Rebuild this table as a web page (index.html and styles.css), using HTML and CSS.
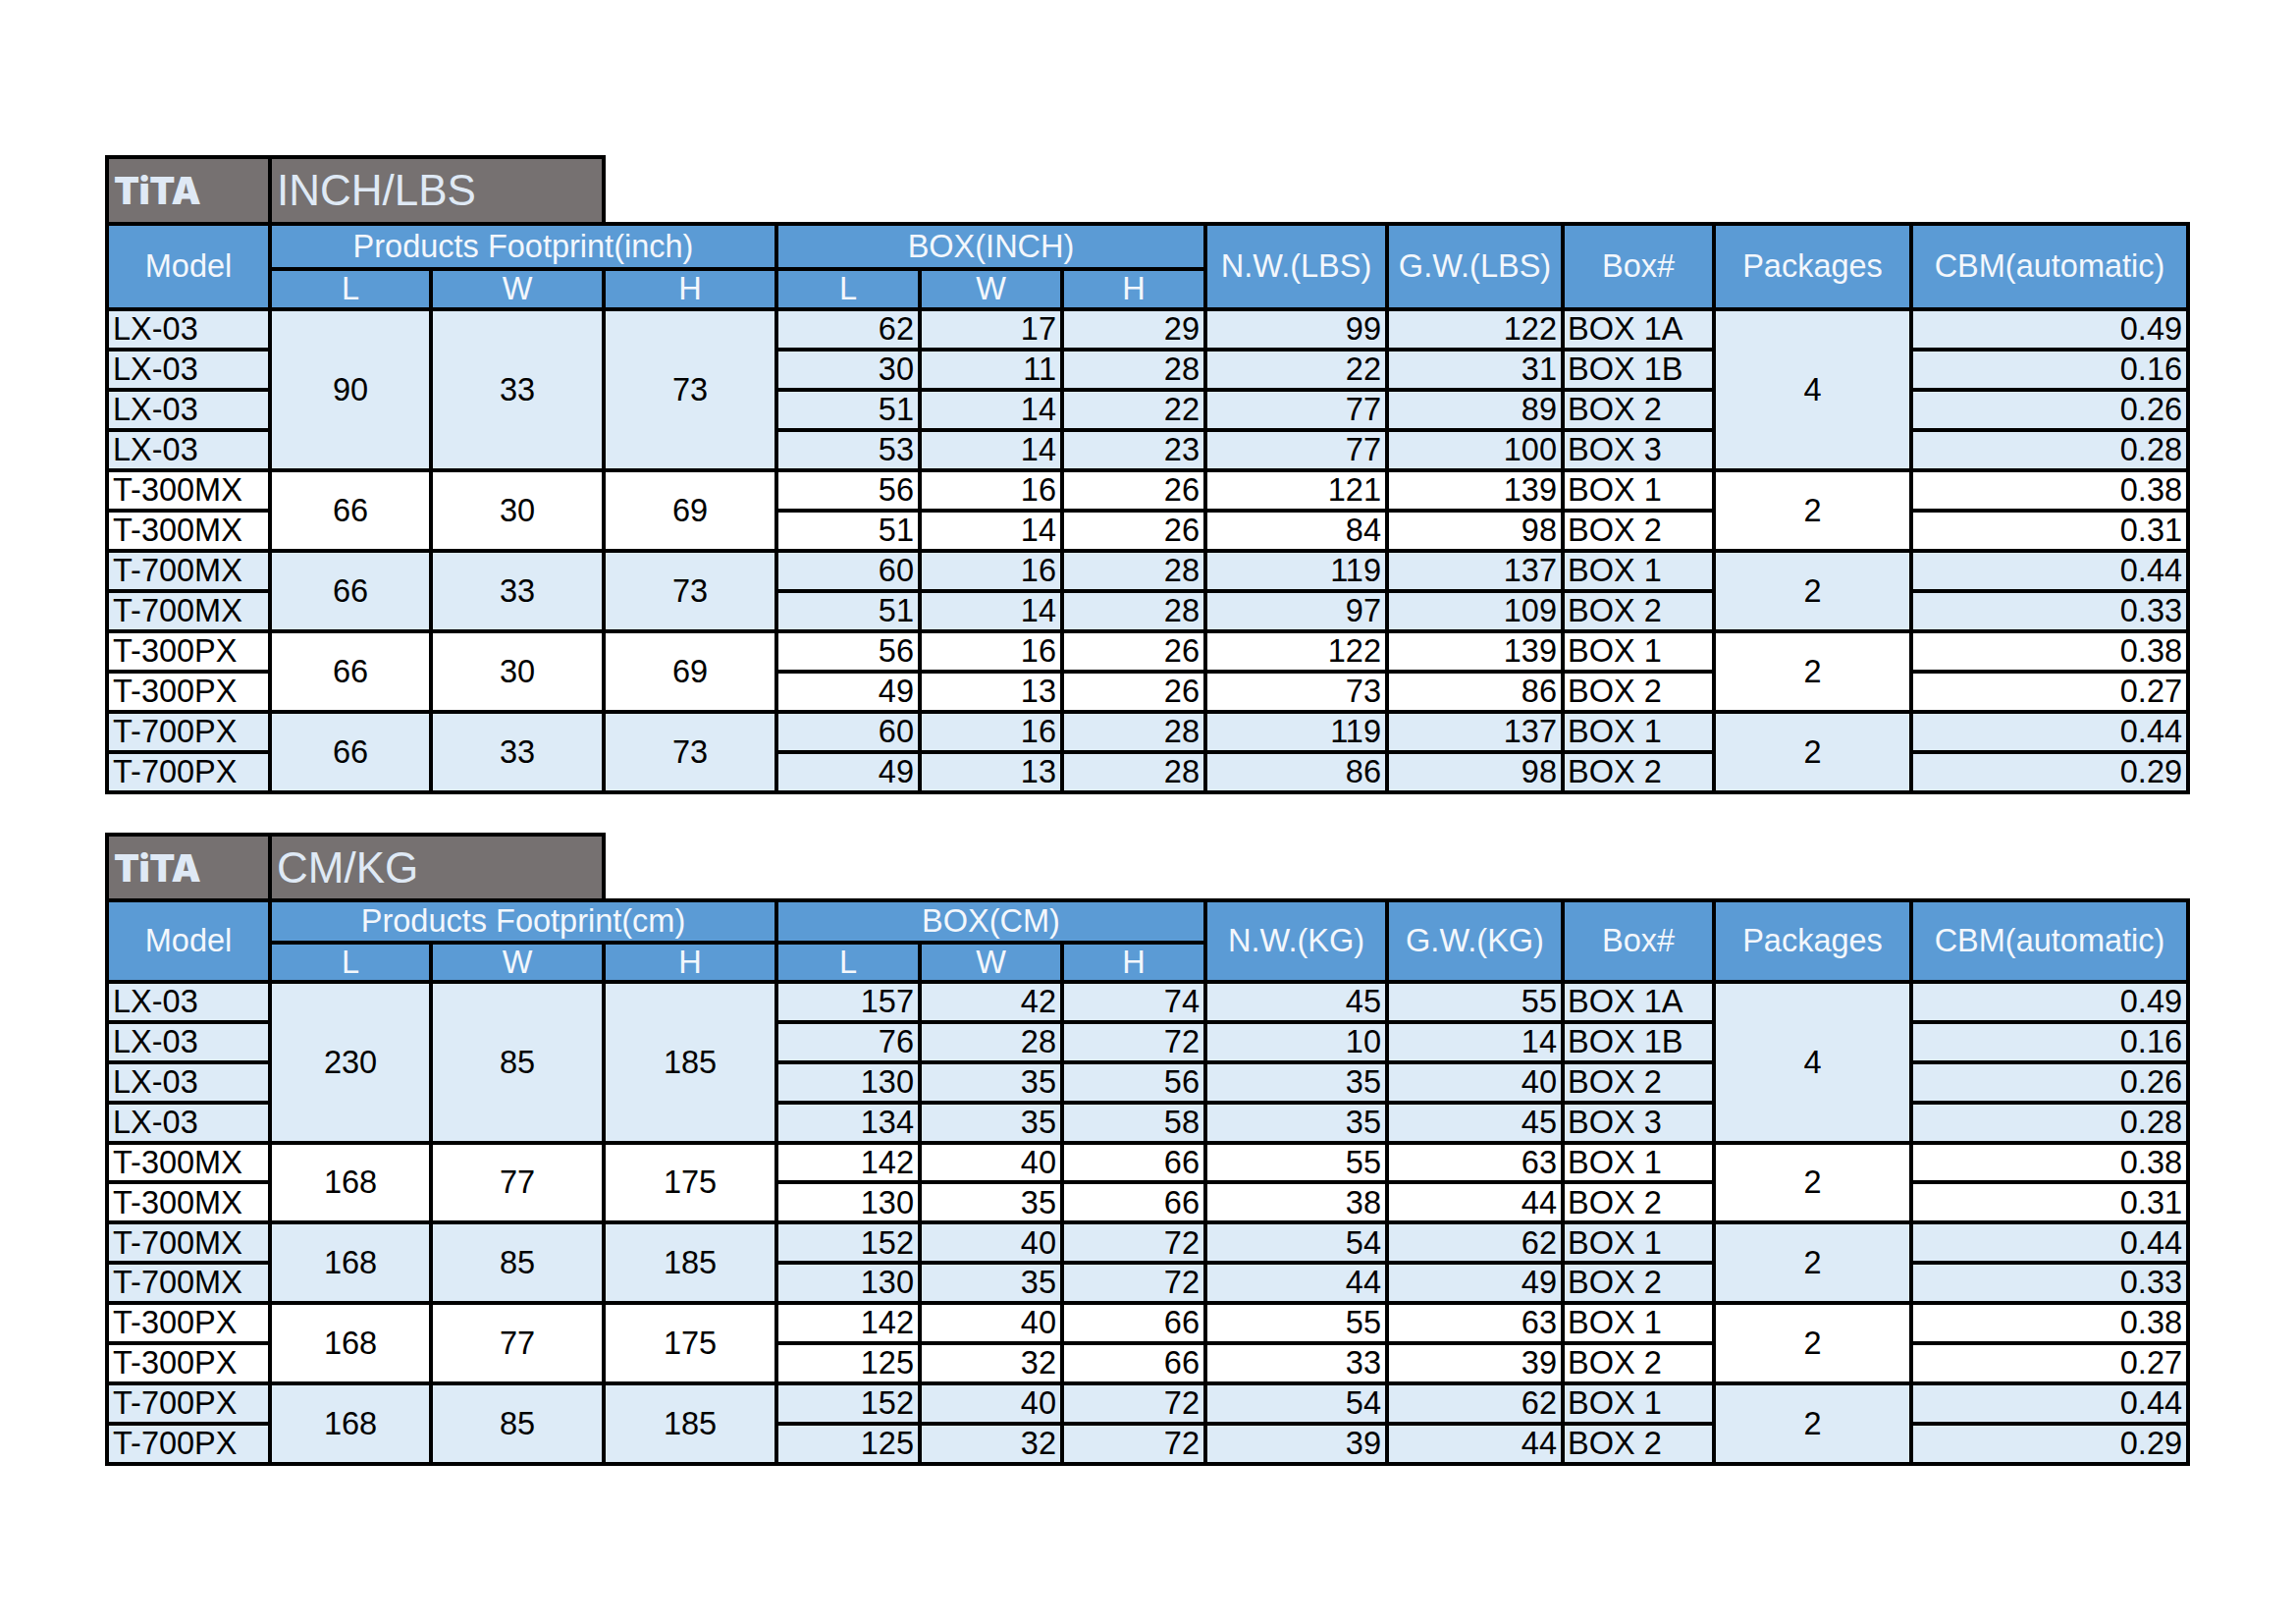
FILE: index.html
```html
<!DOCTYPE html>
<html>
<head>
<meta charset="utf-8">
<title>TiTA packing list</title>
<link rel="stylesheet" href="styles.css">
</head>
<body>
<div class="page">

<table class="spec">
  <colgroup>
    <col class="w-model"><col class="w-fl"><col class="w-fw"><col class="w-fh">
    <col class="w-bl"><col class="w-bw"><col class="w-bh">
    <col class="w-nw"><col class="w-gw"><col class="w-box"><col class="w-pkg"><col class="w-cbm">
  </colgroup>
  <tbody>
    <tr class="r-title"><td class="logo">TiTA</td><td class="title" colspan="2">INCH/LBS</td><td class="blank" colspan="9"></td></tr>
    <tr class="r-h1"><th rowspan="2">Model</th><th colspan="3">Products Footprint(inch)</th><th colspan="3">BOX(INCH)</th><th rowspan="2">N.W.(LBS)</th><th rowspan="2">G.W.(LBS)</th><th rowspan="2">Box#</th><th rowspan="2">Packages</th><th rowspan="2">CBM(automatic)</th></tr>
    <tr class="r-h2"><th>L</th><th>W</th><th>H</th><th>L</th><th>W</th><th>H</th></tr>
  </tbody>
  <tbody class="tint">
    <tr><td class="m">LX-03</td><td class="c" rowspan="4">90</td><td class="c" rowspan="4">33</td><td class="c" rowspan="4">73</td><td class="r">62</td><td class="r">17</td><td class="r">29</td><td class="r">99</td><td class="r">122</td><td class="l">BOX 1A</td><td class="c" rowspan="4">4</td><td class="r">0.49</td></tr>
    <tr><td class="m">LX-03</td><td class="r">30</td><td class="r">11</td><td class="r">28</td><td class="r">22</td><td class="r">31</td><td class="l">BOX 1B</td><td class="r">0.16</td></tr>
    <tr><td class="m">LX-03</td><td class="r">51</td><td class="r">14</td><td class="r">22</td><td class="r">77</td><td class="r">89</td><td class="l">BOX 2</td><td class="r">0.26</td></tr>
    <tr><td class="m">LX-03</td><td class="r">53</td><td class="r">14</td><td class="r">23</td><td class="r">77</td><td class="r">100</td><td class="l">BOX 3</td><td class="r">0.28</td></tr>
  </tbody>
  <tbody class="plain">
    <tr><td class="m">T-300MX</td><td class="c" rowspan="2">66</td><td class="c" rowspan="2">30</td><td class="c" rowspan="2">69</td><td class="r">56</td><td class="r">16</td><td class="r">26</td><td class="r">121</td><td class="r">139</td><td class="l">BOX 1</td><td class="c" rowspan="2">2</td><td class="r">0.38</td></tr>
    <tr><td class="m">T-300MX</td><td class="r">51</td><td class="r">14</td><td class="r">26</td><td class="r">84</td><td class="r">98</td><td class="l">BOX 2</td><td class="r">0.31</td></tr>
  </tbody>
  <tbody class="tint">
    <tr><td class="m">T-700MX</td><td class="c" rowspan="2">66</td><td class="c" rowspan="2">33</td><td class="c" rowspan="2">73</td><td class="r">60</td><td class="r">16</td><td class="r">28</td><td class="r">119</td><td class="r">137</td><td class="l">BOX 1</td><td class="c" rowspan="2">2</td><td class="r">0.44</td></tr>
    <tr><td class="m">T-700MX</td><td class="r">51</td><td class="r">14</td><td class="r">28</td><td class="r">97</td><td class="r">109</td><td class="l">BOX 2</td><td class="r">0.33</td></tr>
  </tbody>
  <tbody class="plain">
    <tr><td class="m">T-300PX</td><td class="c" rowspan="2">66</td><td class="c" rowspan="2">30</td><td class="c" rowspan="2">69</td><td class="r">56</td><td class="r">16</td><td class="r">26</td><td class="r">122</td><td class="r">139</td><td class="l">BOX 1</td><td class="c" rowspan="2">2</td><td class="r">0.38</td></tr>
    <tr><td class="m">T-300PX</td><td class="r">49</td><td class="r">13</td><td class="r">26</td><td class="r">73</td><td class="r">86</td><td class="l">BOX 2</td><td class="r">0.27</td></tr>
  </tbody>
  <tbody class="tint">
    <tr><td class="m">T-700PX</td><td class="c" rowspan="2">66</td><td class="c" rowspan="2">33</td><td class="c" rowspan="2">73</td><td class="r">60</td><td class="r">16</td><td class="r">28</td><td class="r">119</td><td class="r">137</td><td class="l">BOX 1</td><td class="c" rowspan="2">2</td><td class="r">0.44</td></tr>
    <tr><td class="m">T-700PX</td><td class="r">49</td><td class="r">13</td><td class="r">28</td><td class="r">86</td><td class="r">98</td><td class="l">BOX 2</td><td class="r">0.29</td></tr>
  </tbody>
</table>

<table class="spec second">
  <colgroup>
    <col class="w-model"><col class="w-fl"><col class="w-fw"><col class="w-fh">
    <col class="w-bl"><col class="w-bw"><col class="w-bh">
    <col class="w-nw"><col class="w-gw"><col class="w-box"><col class="w-pkg"><col class="w-cbm">
  </colgroup>
  <tbody>
    <tr class="r-title"><td class="logo">TiTA</td><td class="title" colspan="2">CM/KG</td><td class="blank" colspan="9"></td></tr>
    <tr class="r-h1"><th rowspan="2">Model</th><th colspan="3">Products Footprint(cm)</th><th colspan="3">BOX(CM)</th><th rowspan="2">N.W.(KG)</th><th rowspan="2">G.W.(KG)</th><th rowspan="2">Box#</th><th rowspan="2">Packages</th><th rowspan="2">CBM(automatic)</th></tr>
    <tr class="r-h2"><th>L</th><th>W</th><th>H</th><th>L</th><th>W</th><th>H</th></tr>
  </tbody>
  <tbody class="tint">
    <tr><td class="m">LX-03</td><td class="c" rowspan="4">230</td><td class="c" rowspan="4">85</td><td class="c" rowspan="4">185</td><td class="r">157</td><td class="r">42</td><td class="r">74</td><td class="r">45</td><td class="r">55</td><td class="l">BOX 1A</td><td class="c" rowspan="4">4</td><td class="r">0.49</td></tr>
    <tr><td class="m">LX-03</td><td class="r">76</td><td class="r">28</td><td class="r">72</td><td class="r">10</td><td class="r">14</td><td class="l">BOX 1B</td><td class="r">0.16</td></tr>
    <tr><td class="m">LX-03</td><td class="r">130</td><td class="r">35</td><td class="r">56</td><td class="r">35</td><td class="r">40</td><td class="l">BOX 2</td><td class="r">0.26</td></tr>
    <tr><td class="m">LX-03</td><td class="r">134</td><td class="r">35</td><td class="r">58</td><td class="r">35</td><td class="r">45</td><td class="l">BOX 3</td><td class="r">0.28</td></tr>
  </tbody>
  <tbody class="plain">
    <tr><td class="m">T-300MX</td><td class="c" rowspan="2">168</td><td class="c" rowspan="2">77</td><td class="c" rowspan="2">175</td><td class="r">142</td><td class="r">40</td><td class="r">66</td><td class="r">55</td><td class="r">63</td><td class="l">BOX 1</td><td class="c" rowspan="2">2</td><td class="r">0.38</td></tr>
    <tr><td class="m">T-300MX</td><td class="r">130</td><td class="r">35</td><td class="r">66</td><td class="r">38</td><td class="r">44</td><td class="l">BOX 2</td><td class="r">0.31</td></tr>
  </tbody>
  <tbody class="tint">
    <tr><td class="m">T-700MX</td><td class="c" rowspan="2">168</td><td class="c" rowspan="2">85</td><td class="c" rowspan="2">185</td><td class="r">152</td><td class="r">40</td><td class="r">72</td><td class="r">54</td><td class="r">62</td><td class="l">BOX 1</td><td class="c" rowspan="2">2</td><td class="r">0.44</td></tr>
    <tr><td class="m">T-700MX</td><td class="r">130</td><td class="r">35</td><td class="r">72</td><td class="r">44</td><td class="r">49</td><td class="l">BOX 2</td><td class="r">0.33</td></tr>
  </tbody>
  <tbody class="plain">
    <tr><td class="m">T-300PX</td><td class="c" rowspan="2">168</td><td class="c" rowspan="2">77</td><td class="c" rowspan="2">175</td><td class="r">142</td><td class="r">40</td><td class="r">66</td><td class="r">55</td><td class="r">63</td><td class="l">BOX 1</td><td class="c" rowspan="2">2</td><td class="r">0.38</td></tr>
    <tr><td class="m">T-300PX</td><td class="r">125</td><td class="r">32</td><td class="r">66</td><td class="r">33</td><td class="r">39</td><td class="l">BOX 2</td><td class="r">0.27</td></tr>
  </tbody>
  <tbody class="tint">
    <tr><td class="m">T-700PX</td><td class="c" rowspan="2">168</td><td class="c" rowspan="2">85</td><td class="c" rowspan="2">185</td><td class="r">152</td><td class="r">40</td><td class="r">72</td><td class="r">54</td><td class="r">62</td><td class="l">BOX 1</td><td class="c" rowspan="2">2</td><td class="r">0.44</td></tr>
    <tr><td class="m">T-700PX</td><td class="r">125</td><td class="r">32</td><td class="r">72</td><td class="r">39</td><td class="r">44</td><td class="l">BOX 2</td><td class="r">0.29</td></tr>
  </tbody>
</table>

</div>
</body>
</html>
```

FILE: styles.css
```css
html, body {
  margin: 0;
  padding: 0;
  background: #ffffff;
}

.page {
  padding: 158px 0 0 107px;
  font-family: "Liberation Sans", Arial, sans-serif;
}

.spec {
  border-collapse: collapse;
  table-layout: fixed;
  width: 2120px;
  font-size: 32.5px;
  line-height: 1;
  color: #000000;
}

.spec.second {
  margin-top: 39px;
}

.w-model { width: 166px; }
.w-fl { width: 164px; }
.w-fw { width: 176px; }
.w-fh { width: 176px; }
.w-bl { width: 146px; }
.w-bw { width: 145px; }
.w-bh { width: 146px; }
.w-nw { width: 185px; }
.w-gw { width: 179px; }
.w-box { width: 154px; }
.w-pkg { width: 201px; }
.w-cbm { width: 282px; }

.spec td,
.spec th {
  border: 4px solid #000000;
  padding: 0 5px;
  white-space: nowrap;
  overflow: hidden;
  vertical-align: middle;
}

.spec th {
  background: #5b9bd5;
  color: #f3f7fc;
  font-weight: normal;
  text-align: center;
}

.r-title { height: 68px; }
.r-h1 { height: 46px; }
.r-h2 { height: 41px; }
.tint tr,
.plain tr { height: 41px; }

.second .r-title { height: 67px; }
.second .r-h1 { height: 43px; }
.second .r-h2 { height: 40px; }
.second .tint tr,
.second .plain tr { height: 40.9px; }

.logo,
.title {
  background: #767171;
  color: #dfe9f5;
}

.logo {
  font-family: Inter, "DejaVu Sans", sans-serif;
  font-size: 38px;
  font-weight: 900;
  letter-spacing: -0.5px;
  padding-left: 7px;
  padding-top: 9px;
}

.title {
  font-size: 44px;
  padding-left: 6px;
}

.spec td.blank {
  border: none;
  background: transparent;
}

.tint td { background: #ddebf7; }
.plain td { background: #ffffff; }

.spec td.m { text-align: left; padding-left: 4px; }
.spec td.l { text-align: left; padding-left: 3px; }
.spec td.c { text-align: center; }
.spec td.r { text-align: right; padding-right: 4px; }
```
